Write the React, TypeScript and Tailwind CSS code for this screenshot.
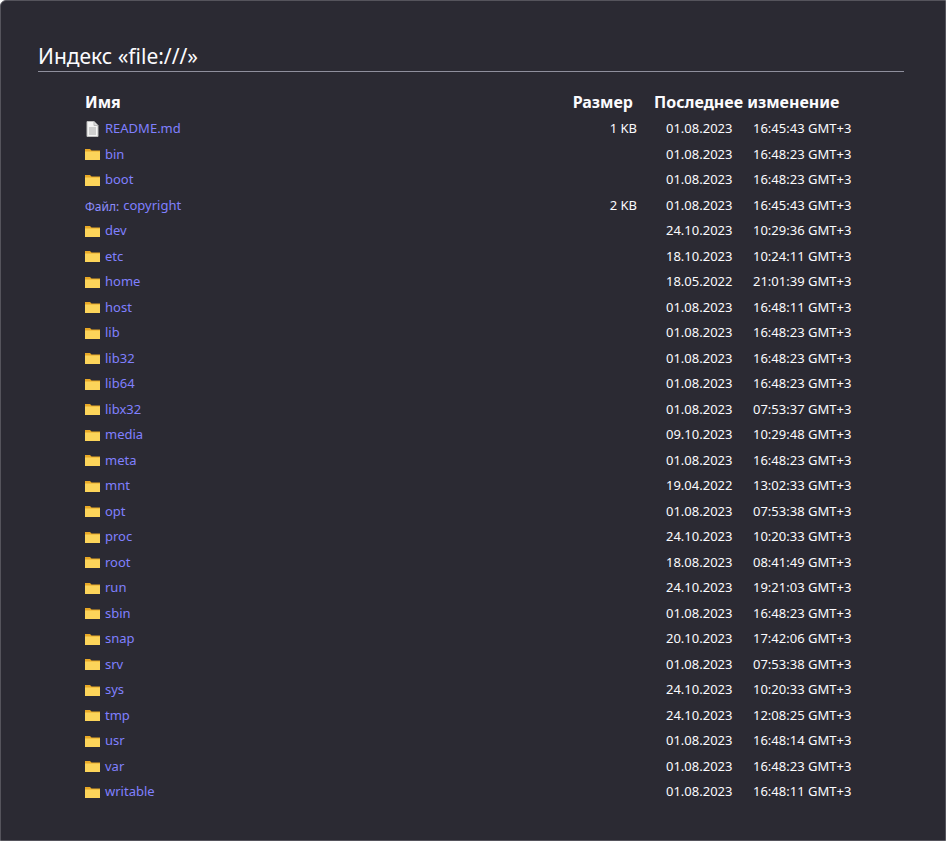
const rows: [string, string, string, string, string][] = [
  ["file", "README.md", "1 KB", "01.08.2023", "16:45:43 GMT+3"],
  ["dir", "bin", "", "01.08.2023", "16:48:23 GMT+3"],
  ["dir", "boot", "", "01.08.2023", "16:48:23 GMT+3"],
  ["link", "copyright", "2 KB", "01.08.2023", "16:45:43 GMT+3"],
  ["dir", "dev", "", "24.10.2023", "10:29:36 GMT+3"],
  ["dir", "etc", "", "18.10.2023", "10:24:11 GMT+3"],
  ["dir", "home", "", "18.05.2022", "21:01:39 GMT+3"],
  ["dir", "host", "", "01.08.2023", "16:48:11 GMT+3"],
  ["dir", "lib", "", "01.08.2023", "16:48:23 GMT+3"],
  ["dir", "lib32", "", "01.08.2023", "16:48:23 GMT+3"],
  ["dir", "lib64", "", "01.08.2023", "16:48:23 GMT+3"],
  ["dir", "libx32", "", "01.08.2023", "07:53:37 GMT+3"],
  ["dir", "media", "", "09.10.2023", "10:29:48 GMT+3"],
  ["dir", "meta", "", "01.08.2023", "16:48:23 GMT+3"],
  ["dir", "mnt", "", "19.04.2022", "13:02:33 GMT+3"],
  ["dir", "opt", "", "01.08.2023", "07:53:38 GMT+3"],
  ["dir", "proc", "", "24.10.2023", "10:20:33 GMT+3"],
  ["dir", "root", "", "18.08.2023", "08:41:49 GMT+3"],
  ["dir", "run", "", "24.10.2023", "19:21:03 GMT+3"],
  ["dir", "sbin", "", "01.08.2023", "16:48:23 GMT+3"],
  ["dir", "snap", "", "20.10.2023", "17:42:06 GMT+3"],
  ["dir", "srv", "", "01.08.2023", "07:53:38 GMT+3"],
  ["dir", "sys", "", "24.10.2023", "10:20:33 GMT+3"],
  ["dir", "tmp", "", "24.10.2023", "12:08:25 GMT+3"],
  ["dir", "usr", "", "01.08.2023", "16:48:14 GMT+3"],
  ["dir", "var", "", "01.08.2023", "16:48:23 GMT+3"],
  ["dir", "writable", "", "01.08.2023", "16:48:11 GMT+3"],
];

function Folder() {
  return (
    <svg width="15" height="12" viewBox="0 0 15 12" className="mr-[5px] shrink-0">
      <path d="M0 1h5l1.5 1.5H15V12H0z" fill="#e8a826" />
      <rect x="0" y="3.5" width="15" height="8.5" fill="#fcd45a" />
    </svg>
  );
}

function FileIcon() {
  return (
    <svg width="15" height="16" viewBox="0 0 15 16" className="mr-[5px] shrink-0">
      <path d="M2 0.5h7l4 4v11H2z" fill="#f4f4f4" stroke="#bbb" />
      <path d="M9 0.5v4h4" fill="#ddd" stroke="#bbb" />
      <path d="M4 7h7M4 9h7M4 11h7M4 13h7" stroke="#aaa" />
    </svg>
  );
}

export default function App() {
  return (
    <div
      className="w-[946px] h-[841px] bg-[#2b2a33] text-[#fbfbfe] border border-[#55545c] rounded-tl-md overflow-hidden"
      style={{ fontFamily: '"Noto Sans", "Open Sans", sans-serif' }}
    >
      <div className="pl-[37px] pr-[41px] pt-[40px]">
        <h1 className="text-[21px] leading-[30px] border-b border-[#8f8f9d]">
          Индекс «file:///»
        </h1>
        <table className="ml-[47px] mt-[16px] text-[13px] border-collapse">
          <thead>
            <tr className="text-[16px] font-bold h-[28px]">
              <th className="text-left w-[452px] p-0">Имя</th>
              <th className="text-right w-[100px] p-0 pr-[4px]">Размер</th>
              <th colSpan={2} className="text-left p-0 pl-[17px]">Последнее изменение</th>
            </tr>
          </thead>
          <tbody>
            {rows.map(([kind, name, size, date, time]) => (
              <tr key={name} className="h-[25.5px]">
                <td className="p-0">
                  <span className="flex items-center">
                    {kind === "dir" && <Folder />}
                    {kind === "file" && <FileIcon />}
                    {kind === "link" && (
                      <span className="text-[#8c8cff] text-[12px] mr-[4px] mt-[3px]">Файл:</span>
                    )}
                    <span className="text-[#8080ff]">{name}</span>
                  </span>
                </td>
                <td className="p-0 text-right">{size}</td>
                <td className="p-0 pl-[29px] w-[116px]">{date}</td>
                <td className="p-0">{time}</td>
              </tr>
            ))}
          </tbody>
        </table>
      </div>
    </div>
  );
}
